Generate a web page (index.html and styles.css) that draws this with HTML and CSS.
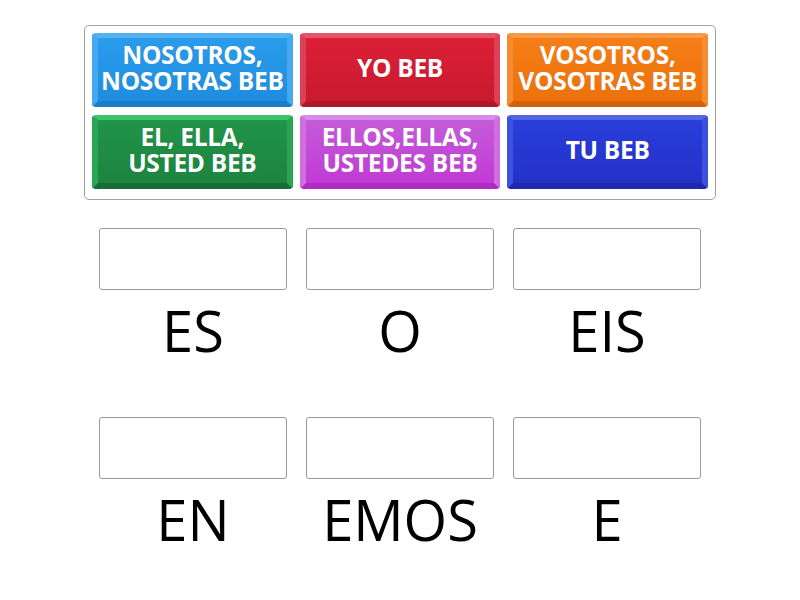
FILE: index.html
```html
<!DOCTYPE html>
<html>
<head>
<meta charset="utf-8">
<link rel="stylesheet" href="styles.css">
</head>
<body>
<div class="page">
  <div class="bank">
    <div class="tile blue"><span>NOSOTROS,<br>NOSOTRAS BEB</span></div>
    <div class="tile red"><span>YO BEB</span></div>
    <div class="tile orange"><span>VOSOTROS,<br>VOSOTRAS BEB</span></div>
    <div class="tile green"><span>EL, ELLA,<br>USTED BEB</span></div>
    <div class="tile purple"><span>ELLOS,ELLAS,<br>USTEDES BEB</span></div>
    <div class="tile indigo"><span>TU BEB</span></div>
  </div>
  <div class="drops">
    <div class="cell"><div class="slot"></div><div class="label">ES</div></div>
    <div class="cell"><div class="slot"></div><div class="label">O</div></div>
    <div class="cell"><div class="slot"></div><div class="label">EIS</div></div>
    <div class="cell"><div class="slot"></div><div class="label">EN</div></div>
    <div class="cell"><div class="slot"></div><div class="label">EMOS</div></div>
    <div class="cell"><div class="slot"></div><div class="label">E</div></div>
  </div>
</div>
</body>
</html>
```
FILE: styles.css
```css
html, body {
  margin: 0;
  padding: 0;
  background: #ffffff;
}
body {
  font-family: "Open Sans", "Liberation Sans", sans-serif;
}
.page {
  width: 800px;
  height: 600px;
  padding-top: 25px;
  box-sizing: border-box;
}
.bank {
  box-sizing: border-box;
  width: 632px;
  height: 175px;
  margin: 0 auto 0 84px;
  border: 1px solid #a0a0a0;
  border-radius: 5px;
  padding: 7px 7px 9px 7px;
  display: grid;
  grid-template-columns: repeat(3, 1fr);
  grid-template-rows: 74px 74px;
  column-gap: 7px;
  row-gap: 8px;
}
.tile {
  box-sizing: border-box;
  border-radius: 4px;
  border-style: solid;
  border-width: 5px 6px 6px 6px;
  display: flex;
  align-items: center;
  justify-content: center;
  text-align: center;
  color: #ffffff;
  font-weight: 700;
  font-size: 24.5px;
  line-height: 26px;
  letter-spacing: -0.3px;
  white-space: nowrap;
  padding: 0 0 4px 0;
  text-shadow: 0 0 1px rgba(0,0,0,0.15);
}
.tile span { display: block; }
.blue {
  background: linear-gradient(#2a9cec, #1f8ddf);
  border-color: #55b2f2 #45a9ef #1a7dc6 #45a9ef;
}
.red {
  background: linear-gradient(#dc1f36, #c81a2f);
  border-color: #e4566a #dd4054 #b0172a #dd4054;
}
.orange {
  background: linear-gradient(#f67e17, #ec720b);
  border-color: #f89a49 #f68c32 #d2620a #f68c32;
}
.green {
  background: linear-gradient(#219448, #1c843f);
  border-color: #3ec468 #2aa554 #176e35 #2aa554;
}
.purple {
  background: linear-gradient(#c45cd9, #c13ad4);
  border-color: #d98ae7 #cf6fe0 #b02ac4 #cf6fe0;
}
.indigo {
  background: linear-gradient(#2a3ed9, #2331c9);
  border-color: #5366e6 #3d51e0 #1d29ac #3d51e0;
}
.drops {
  margin-top: 28px;
  display: grid;
  grid-template-columns: repeat(3, 188px);
  column-gap: 19px;
  row-gap: 48px;
  justify-content: center;
}
.cell {
  display: flex;
  flex-direction: column;
}
.slot {
  box-sizing: border-box;
  height: 62px;
  border: 1px solid #9a9a9a;
  border-radius: 3px;
  background: #ffffff;
}
.label {
  margin-top: 1px;
  height: 78px;
  line-height: 78px;
  font-size: 56px;
  text-align: center;
  color: #000000;
  font-weight: 400;
}
```
